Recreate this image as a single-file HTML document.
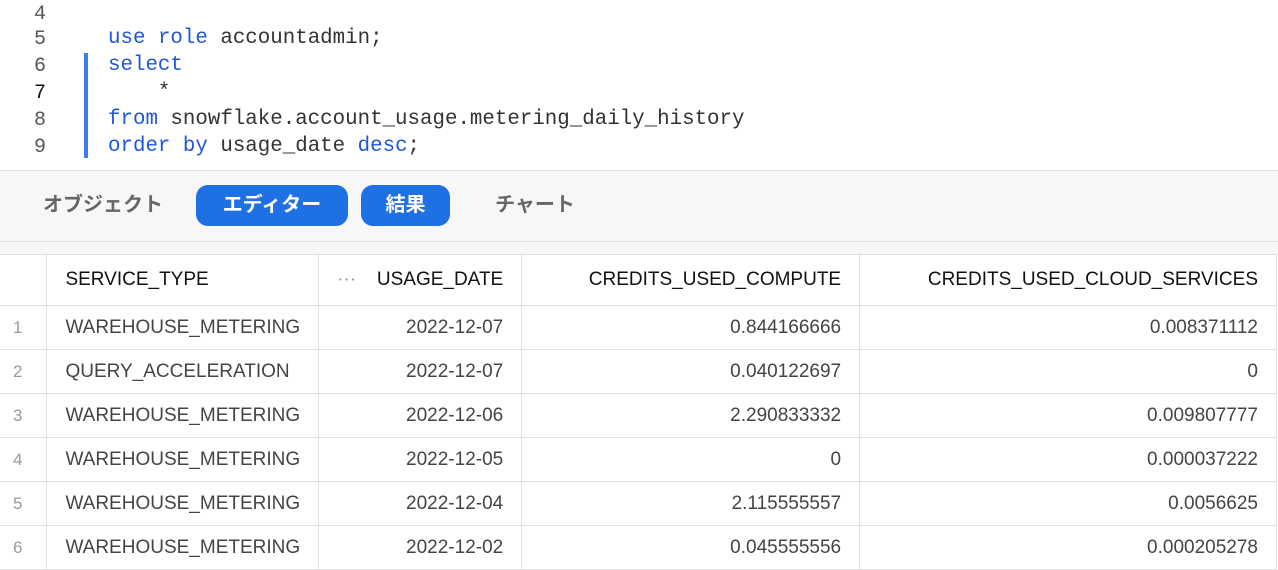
<!DOCTYPE html>
<html><head><meta charset="utf-8"><style>
body{margin:0;width:1278px;height:565px;overflow:hidden;background:#fff;font-family:"Liberation Sans","Noto Sans CJK JP",sans-serif;position:relative}
.ln{position:absolute;left:0;width:46px;text-align:right;font:20px "Liberation Mono",monospace;color:#555}
.cd{position:absolute;left:108px;font:20.8px "Liberation Mono",monospace;color:#333;white-space:pre}
.k{color:#1f57d6}
.bar{position:absolute;left:84px;top:53px;width:4px;height:105px;background:#3c7bf0}
.tb{position:absolute;left:0;top:170px;width:1278px;height:70px;background:#f7f7f7;border-top:1px solid #e2e2e2;border-bottom:1px solid #e2e2e2}
.t{position:absolute;top:14px;height:41px;line-height:41px;font-size:20px;font-weight:bold;color:#666;text-align:center}
.b{background:#1f6fe5;color:#fff;border-radius:12px}
table{position:absolute;left:-1px;top:254px;border-collapse:collapse;font-size:19px;color:#444}
td{border:1px solid #e0e0e0;height:43px;padding:0 18px;white-space:nowrap}
tr:first-child td{height:50px;color:#111}
td.n{color:#999;width:10px;padding:0 0 0 13px;font-size:17px}
.r{text-align:right}
</style></head><body>
<div style="position:absolute;left:0;top:241px;width:1278px;height:13px;background:#f7f7f7"></div>
<div class="ln" style="top:3px">4</div>
<div class="ln" style="top:28px">5</div>
<div class="ln" style="top:55px">6</div>
<div class="ln" style="top:82px;color:#111">7</div>
<div class="ln" style="top:109px">8</div>
<div class="ln" style="top:136px">9</div>
<div class="bar"></div>
<div class="cd" style="top:27px"><span class="k">use</span> <span class="k">role</span> accountadmin;</div>
<div class="cd" style="top:54px"><span class="k">select</span></div>
<div class="cd" style="top:81px">    *</div>
<div class="cd" style="top:108px"><span class="k">from</span> snowflake.account_usage.metering_daily_history</div>
<div class="cd" style="top:135px"><span class="k">order</span> <span class="k">by</span> usage_date <span class="k">desc</span>;</div>
<div class="tb">
<div class="t" style="left:38px;width:130px">オブジェクト</div>
<div class="t b" style="left:196px;width:152px">エディター</div>
<div class="t b" style="left:361px;width:89px">結果</div>
<div class="t" style="left:490px;width:90px">チャート</div>
</div>
<table>
<tr><td class="n" style="width:34px"></td><td style="width:232px">SERVICE_TYPE</td><td class="r" style="width:167px"><span style="color:#999;float:left">···</span>USAGE_DATE</td><td class="r" style="width:302px">CREDITS_USED_COMPUTE</td><td class="r" style="width:381px">CREDITS_USED_CLOUD_SERVICES</td></tr>
<tr><td class="n">1</td><td>WAREHOUSE_METERING</td><td class="r">2022-12-07</td><td class="r">0.844166666</td><td class="r">0.008371112</td></tr>
<tr><td class="n">2</td><td>QUERY_ACCELERATION</td><td class="r">2022-12-07</td><td class="r">0.040122697</td><td class="r">0</td></tr>
<tr><td class="n">3</td><td>WAREHOUSE_METERING</td><td class="r">2022-12-06</td><td class="r">2.290833332</td><td class="r">0.009807777</td></tr>
<tr><td class="n">4</td><td>WAREHOUSE_METERING</td><td class="r">2022-12-05</td><td class="r">0</td><td class="r">0.000037222</td></tr>
<tr><td class="n">5</td><td>WAREHOUSE_METERING</td><td class="r">2022-12-04</td><td class="r">2.115555557</td><td class="r">0.0056625</td></tr>
<tr><td class="n">6</td><td>WAREHOUSE_METERING</td><td class="r">2022-12-02</td><td class="r">0.045555556</td><td class="r">0.000205278</td></tr>
</table>
</body></html>
